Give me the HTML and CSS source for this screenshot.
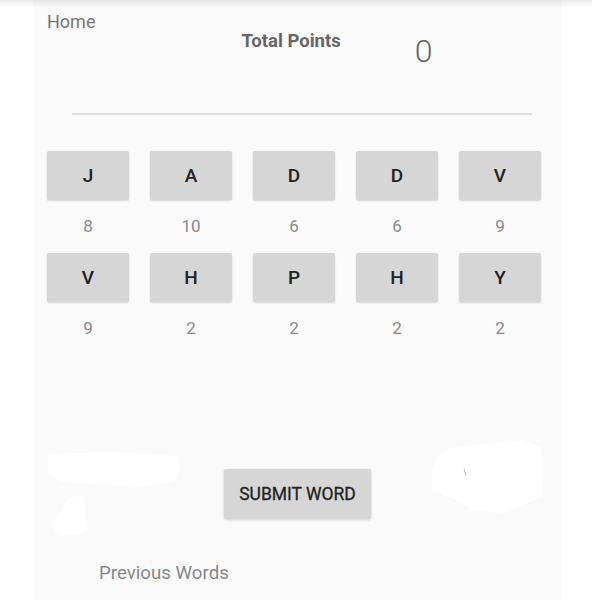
FILE: index.html
```html
<!DOCTYPE html>
<html lang="en">
<head>
    <meta charset="UTF-8">
    <meta name="viewport" content="width=device-width, initial-scale=1.0">
    <title>Word Game</title>
    <link rel="stylesheet" href="styles.css">
</head>
<body>
    <div class="shade"></div>

    <div class="app">
        <!-- 顶部 -->
        <div class="header">
            <span class="home">Home</span>
            <span class="total_label">Total Points</span>
            <span class="total_value">0</span>
        </div>

        <div class="divider"></div>

        <!-- 字母格子 -->
        <ul class="letters">
            <li><span class="tile">J</span><span class="score">8</span></li>
            <li><span class="tile">A</span><span class="score">10</span></li>
            <li><span class="tile">D</span><span class="score">6</span></li>
            <li><span class="tile">D</span><span class="score">6</span></li>
            <li><span class="tile">V</span><span class="score">9</span></li>
            <li><span class="tile">V</span><span class="score">9</span></li>
            <li><span class="tile">H</span><span class="score">2</span></li>
            <li><span class="tile">P</span><span class="score">2</span></li>
            <li><span class="tile">H</span><span class="score">2</span></li>
            <li><span class="tile">Y</span><span class="score">2</span></li>
        </ul>

        <div class="submit_row">
            <button class="submit">SUBMIT WORD</button>
        </div>

        <p class="previous">Previous Words</p>
    </div>

    <!-- 涂白的部分 -->
    <svg class="blots" width="592" height="600" viewBox="0 0 592 600">
        <g fill="#fff" stroke="#fff" stroke-width="4" stroke-linejoin="round">
            <polygon points="50,456 110,454 176,458 178,470 172,480 140,484 100,482 62,480 50,472"/>
            <polygon points="70,499 82,498 83,515 86,528 78,533 60,533 54,526 62,512"/>
            <polygon points="448,450 490,446 520,443 538,448 541,470 540,496 522,503 500,511 474,508 452,496 434,490 434,470 440,458"/>
        </g>
        <path d="M464 469 L466 476" stroke="#bbb" stroke-width="1"/>
    </svg>
</body>
</html>
```

FILE: styles.css
```css
*{
    margin: 0;
    padding: 0;
}
li{
    list-style: none;
}
body{
    background: #fff;
    font-family: Roboto, "Liberation Sans", sans-serif;
    position: relative;
    overflow: hidden;
}
.shade{
    position: absolute;
    left: 0;
    top: 0;
    width: 100%;
    height: 7px;
    background: linear-gradient(rgba(0,0,0,.09), rgba(0,0,0,0));
    z-index: 2;
}
.app{
    width: 529px;
    min-height: 600px;
    margin-left: 33px;
    background: #fafafa;
    padding: 0 14px;
    box-sizing: border-box;
}
.header{
    display: flex;
    align-items: flex-start;
    height: 100px;
}
.home{
    margin-top: 12px;
    font-size: 18px;
    line-height: 20px;
    color: #777;
}
.total_label{
    margin-left: 146px;
    margin-top: 31px;
    font-size: 18.5px;
    line-height: 20px;
    font-weight: bold;
    color: #666;
}
.total_value{
    margin-left: 74px;
    margin-top: 33px;
    font-size: 32px;
    line-height: 36px;
    font-weight: 300;
    color: #666;
}
.divider{
    margin: 13px 0 0 25px;
    width: 460px;
    height: 2px;
    background: #dedede;
}
.letters{
    margin-top: 36px;
    display: grid;
    grid-template-columns: repeat(5, 82px);
    column-gap: 21px;
}
.letters li{
    display: flex;
    flex-direction: column;
}
.letters .tile{
    height: 49px;
    line-height: 49px;
    text-align: center;
    background: #d6d6d6;
    border-radius: 2px;
    box-shadow: 0 1px 2px rgba(0,0,0,.15);
    font-size: 19px;
    font-weight: 500;
    color: #222;
}
.letters .score{
    height: 53px;
    line-height: 53px;
    text-align: center;
    font-size: 17px;
    color: #8a8a8a;
}
.submit_row{
    margin-top: 114px;
    display: flex;
    justify-content: center;
}
.submit{
    width: 147px;
    height: 50px;
    border: none;
    border-radius: 2px;
    background: #d6d6d6;
    box-shadow: 0 1px 3px rgba(0,0,0,.18);
    font-family: Roboto, "Liberation Sans", sans-serif;
    font-size: 17.5px;
    font-weight: 400;
    -webkit-text-stroke: 0.3px #222;
    color: #222;
}
.previous{
    margin: 42px 0 0 52px;
    font-size: 18.7px;
    line-height: 24px;
    color: #888;
}
.blots{
    position: absolute;
    left: 0;
    top: 0;
    pointer-events: none;
}
```
